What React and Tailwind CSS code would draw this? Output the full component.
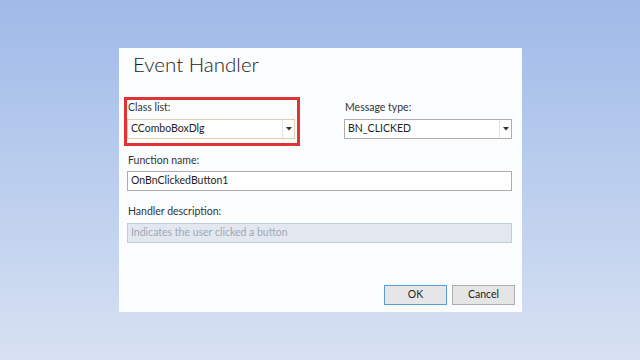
import React from "react";

function Arrow() {
  return (
    <svg width="6" height="4" viewBox="0 0 6 4" className="block">
      <path d="M0 0 H6 L3 3.5 Z" fill="#333" />
    </svg>
  );
}

function Combo({ value, border, width }) {
  return (
    <div className={`flex h-[20px] ${width} border ${border} bg-white`}>
      <div className="flex-1 flex items-center pl-[3px] text-[10.5px] text-[#1e1e1e]">{value}</div>
      <div className="w-[12px] flex items-center justify-center border-l border-[#e3e3e3]">
        <Arrow />
      </div>
    </div>
  );
}

export default function App() {
  return (
    <div
      className="w-[640px] h-[360px] bg-linear-to-b from-[#9fbae8] to-[#d7e1f2] pt-[48px] pl-[119px]"
      style={{ fontFamily: "Lato, 'Liberation Sans', sans-serif" }}
    >
      <div className="w-[403px] h-[264px] bg-[#fbfcfe] pl-[8px] flex flex-col">
        <div className="pt-[4px] pl-[6px] text-[20.5px] leading-[24px] font-light text-[#1b1b1b] h-[49px]">
          Event Handler
        </div>
        <div className="flex">
          <div className="-ml-[3px] w-[176px] h-[49px] border-[3px] border-[#e03434] flex flex-col">
            <div className="pl-[1px] text-[10.5px] leading-[15px] text-[#333]">Class list:</div>
            <div className="mt-[4px]">
              <Combo value="CComboBoxDlg" border="border-[#dccfb3]" width="w-[168px]" />
            </div>
          </div>
          <div className="ml-[44px] pt-[3px] flex flex-col">
            <div className="pl-[1px] text-[10.5px] leading-[15px] text-[#333]">Message type:</div>
            <div className="mt-[4px]">
              <Combo value="BN_CLICKED" border="border-[#acacac]" width="w-[168px]" />
            </div>
          </div>
        </div>
        <div className="mt-[7px] pl-[1px] text-[10.5px] leading-[15px] text-[#333]">Function name:</div>
        <div className="mt-[3px] w-[385px] h-[20px] border border-[#acacac] bg-white flex items-center pl-[3px] text-[10.5px] text-[#1e1e1e]">
          OnBnClickedButton1
        </div>
        <div className="mt-[13px] pl-[1px] text-[10.5px] leading-[15px] text-[#333]">Handler description:</div>
        <div className="mt-[4px] w-[385px] h-[20px] border border-[#c3ccd9] bg-[#e2e7f0] flex items-center pl-[3px] text-[10.5px] text-[#9fa7b5]">
          Indicates the user clicked a button
        </div>
        <div className="mt-[42px] flex justify-end pr-[7px] gap-[5px]">
          <button className="w-[63px] h-[20px] border border-[#5a9bd5] bg-[#e6e6e8] text-[10.5px] text-[#222]">OK</button>
          <button className="w-[63px] h-[20px] border border-[#adadad] bg-[#e5e5e5] text-[10.5px] text-[#222]">Cancel</button>
        </div>
      </div>
    </div>
  );
}
